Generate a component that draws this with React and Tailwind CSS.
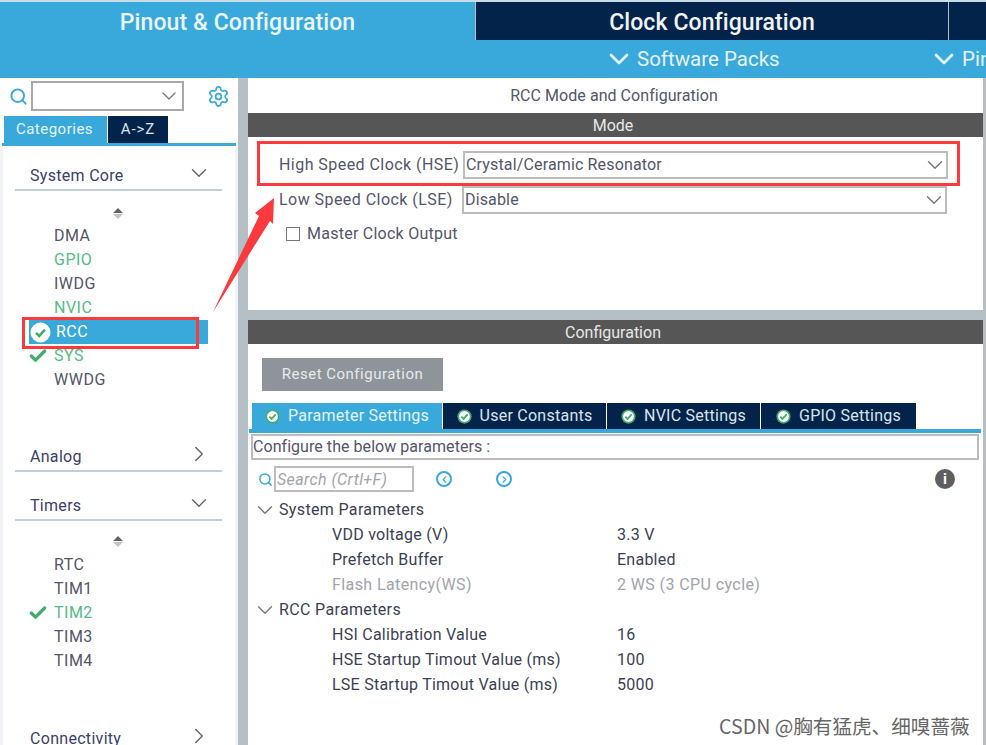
import React from 'react';
import { ChevronDown, ChevronRight, ChevronLeft, Search, Settings, Check } from 'lucide-react';

const systemCore = [
    { name: 'DMA' },
    { name: 'GPIO', tone: 'green' },
    { name: 'IWDG' },
    { name: 'NVIC', tone: 'green' },
    { name: 'RCC', selected: true },
    { name: 'SYS', tone: 'green', checked: true },
    { name: 'WWDG' },
];

const timers = [
    { name: 'RTC' },
    { name: 'TIM1' },
    { name: 'TIM2', tone: 'green', checked: true },
    { name: 'TIM3' },
    { name: 'TIM4' },
];

const systemParams = [
    { label: 'VDD voltage (V)', value: '3.3 V' },
    { label: 'Prefetch Buffer', value: 'Enabled' },
    { label: 'Flash Latency(WS)', value: '2 WS (3 CPU cycle)', muted: true },
];

const rccParams = [
    { label: 'HSI Calibration Value', value: '16' },
    { label: 'HSE Startup Timout Value (ms)', value: '100' },
    { label: 'LSE Startup Timout Value (ms)', value: '5000' },
];

const CheckBadge = ({ size = 14, ring = '#3fae6a' }) => (
    <svg width={size} height={size} viewBox="0 0 16 16" className="shrink-0">
        <circle cx="8" cy="8" r="7.6" fill={ring} />
        <circle cx="8" cy="8" r="5.8" fill="#ffffff" />
        <path d="M4.6 8.2l2.4 2.4 4.4-4.8" fill="none" stroke="#3fae6a" strokeWidth="1.9" />
    </svg>
);

const ScrollArrows = () => (
    <div className="flex h-[14px] flex-col items-center justify-center gap-[1px] pr-[3px]">
        <div className="h-0 w-0 border-x-[5px] border-b-[5px] border-x-transparent border-b-[#666666]" />
        <div className="h-0 w-0 border-x-[5px] border-t-[5px] border-x-transparent border-t-[#c4c4c4]" />
    </div>
);

const SectionHeader = ({ title, open }) => (
    <div className="mx-[15px] flex h-[34px] w-[207px] items-center justify-between border-b-2 border-[#c3ced6] pl-[15px] pr-[10px] pt-[6px]">
        <span className="text-[16px] tracking-[0.3px] text-[#39406b]">{title}</span>
        {open
            ? <ChevronDown size={26} strokeWidth={1.3} className="mb-[6px] text-[#666666]" />
            : <ChevronRight size={26} strokeWidth={1.3} className="mb-[6px] text-[#666666]" />}
    </div>
);

const PeripheralRow = ({ item }) => {
    if (item.selected) {
        return (
            <div className="ml-[29px] flex h-[24px] w-[179px] items-center bg-[#39a9dc] pl-[1px] text-[16px] tracking-[0.5px] text-white">
                <CheckBadge size={21} ring="#ffffff" />
                <span className="ml-[5px]">{item.name}</span>
            </div>
        );
    }
    return (
        <div className="flex h-[24px] items-center text-[16px] tracking-[0.5px]">
            <span className="flex w-[54px] justify-end pr-[6px]">
                {item.checked && <Check size={20} strokeWidth={4} className="text-[#3fae6a]" />}
            </span>
            <span className={item.tone === 'green' ? 'text-[#52bd84]' : 'text-[#54566a]'}>{item.name}</span>
        </div>
    );
};

const Sidebar = () => (
    <div className="flex w-[238px] shrink-0 flex-col overflow-hidden bg-white">
        <div className="flex h-[38px] shrink-0 items-center pb-[2px] pl-[9px]">
            <Search size={19} strokeWidth={2.4} className="text-[#39a9dc]" />
            <div className="ml-[3px] flex h-[30px] w-[153px] items-center justify-end border-2 border-[#a9a9a9] pr-[1px]">
                <ChevronDown size={24} strokeWidth={1.3} className="text-[#777777]" />
            </div>
            <Settings size={23} strokeWidth={1.8} className="ml-[23px] text-[#39a9dc]" />
        </div>
        <div className="flex h-[27px] shrink-0 pl-[4px]">
            <div className="flex w-[103px] items-center justify-center bg-[#39a9dc] pr-[2px] text-[15px] tracking-[0.5px] text-[#e4f3fa]">Categories</div>
            <div className="ml-[1px] flex w-[60px] items-center justify-center bg-[#03234b] text-[15px] tracking-[0.9px] text-[#dbe4ec]">A-&gt;Z</div>
        </div>
        <div className="ml-[2px] h-[3px] w-[234px] shrink-0 bg-[#39a9dc]" />
        <div className="min-h-0 flex-1 overflow-hidden border-x-[3px] border-x-[#f1f4f6]">
            <div className="-mx-[3px] pt-[11px]">
                <SectionHeader title="System Core" open />
                <div className="pt-[15px]"><ScrollArrows /></div>
                <div className="pt-[4px]">
                    {systemCore.map((item) => <PeripheralRow key={item.name} item={item} />)}
                </div>
                <div className="pt-[46px]"><SectionHeader title="Analog" /></div>
                <div className="pt-[15px]"><SectionHeader title="Timers" open /></div>
                <div className="pt-[13px]"><ScrollArrows /></div>
                <div className="pt-[5px]">
                    {timers.map((item) => <PeripheralRow key={item.name} item={item} />)}
                </div>
                <div className="pt-[47px]"><SectionHeader title="Connectivity" /></div>
            </div>
        </div>
    </div>
);

const SelectRow = ({ label, value, labelWidth }) => (
    <div className="flex h-[28px] items-center text-[16px] text-[#54566a]">
        <span className={`tracking-[0.45px] ${labelWidth}`}>{label}</span>
        <div className="flex h-full w-[485px] items-center justify-between border-2 border-[#bcbcbc] pl-[1px]">
            <span className="tracking-[0.15px]">{value}</span>
            <ChevronDown size={26} strokeWidth={1.3} className="-mr-[2px] text-[#777777]" />
        </div>
    </div>
);

const ConfigTab = ({ label, width, active }) => (
    <div className={`flex h-full items-center justify-center gap-[8px] text-[16px] tracking-[0.25px] ${width} ${active ? 'bg-[#39a9dc] text-[#e4f3fa]' : 'bg-[#03234b] text-[#dbe4ec]'}`}>
        <CheckBadge size={15} />
        {label}
    </div>
);

const ParamGroup = ({ title, rows }) => (
    <div>
        <div className="flex h-[25px] items-center pl-[4px] text-[#3c3f55]">
            <ChevronDown size={26} strokeWidth={1.3} className="text-[#777777]" />
            <span className="ml-[1px] text-[16px] tracking-[0.35px]">{title}</span>
        </div>
        {rows.map((row) => (
            <div key={row.label} className={`flex h-[25px] items-center text-[16px] ${row.muted ? 'tracking-[0.4px] text-[#a2a4ab]' : 'tracking-[0.25px] text-[#3c3f55]'}`}>
                <span className="w-[369px] shrink-0 pl-[84px]">{row.label}</span>
                <span>{row.value}</span>
            </div>
        ))}
    </div>
);

const ModePanel = () => (
    <div className="h-[232px] shrink-0 bg-white">
        <div className="flex h-[35px] items-center justify-center pr-[3px] text-[16px] tracking-[0.05px] text-[#54566a]">RCC Mode and Configuration</div>
        <div className="flex h-[24px] items-center justify-center bg-[#555655] pr-[5px] pt-[1px] text-[16px] text-[#e8e8e8]">Mode</div>
        <div className="pl-[31px] pt-[14px]">
            <SelectRow label="High Speed Clock (HSE)" value="Crystal/Ceramic Resonator" labelWidth="w-[184px]" />
            <div className="mt-[7px]">
                <SelectRow label="Low Speed Clock (LSE)" value="Disable" labelWidth="w-[183px]" />
            </div>
            <div className="ml-[7px] mt-[6px] flex h-[28px] items-center text-[16px] tracking-[0.25px] text-[#54566a]">
                <div className="h-[14px] w-[14px] border border-[#777777]" />
                <span className="ml-[7px]">Master Clock Output</span>
            </div>
        </div>
    </div>
);

const ConfigPanel = () => (
    <div className="min-h-0 flex-1 bg-white">
        <div className="flex h-[24px] items-center justify-center bg-[#555655] pr-[5px] pt-[1px] text-[16px] text-[#e8e8e8]">Configuration</div>
        <div className="pl-[14px] pt-[14px]">
            <div className="flex h-[33px] w-[181px] items-center justify-center bg-[#8e9499] text-[15px] tracking-[0.5px] text-[#e8eaec]">Reset Configuration</div>
        </div>
        <div className="ml-[4px] mt-[12px] flex h-[26px] gap-[1px]">
            <ConfigTab label="Parameter Settings" width="w-[190px]" active />
            <ConfigTab label="User Constants" width="w-[163px]" />
            <ConfigTab label="NVIC Settings" width="w-[153px]" />
            <ConfigTab label="GPIO Settings" width="w-[155px]" />
        </div>
        <div className="ml-[1px] h-[4px] w-[732px] bg-[#39a9dc]" />
        <div className="ml-[3px] mt-[1px] flex h-[26px] w-[728px] items-center border-2 border-[#bcbcbc] text-[16px] tracking-[0.05px] text-[#54566a]">Configure the below parameters :</div>
        <div className="flex h-[33px] items-center pl-[10px] pt-[5px]">
            <Search size={15} strokeWidth={2.4} className="text-[#39a9dc]" />
            <div className="ml-[1px] flex h-[26px] w-[140px] items-center border-2 border-[#bcbcbc] pl-[1px] pt-[1px] text-[16px] italic tracking-[0.4px] text-[#a2a4ab]">Search (Crtl+F)</div>
            <div className="ml-[22px] flex h-[16px] w-[16px] items-center justify-center rounded-full border-2 border-[#39a9dc]">
                <ChevronLeft size={11} strokeWidth={2.5} className="text-[#39a9dc]" />
            </div>
            <div className="ml-[44px] flex h-[16px] w-[16px] items-center justify-center rounded-full border-2 border-[#39a9dc]">
                <ChevronRight size={11} strokeWidth={2.5} className="text-[#39a9dc]" />
            </div>
            <div className="ml-[423px] flex h-[20px] w-[20px] items-center justify-center rounded-full bg-[#5f5f5f] text-[15px] font-bold text-white">i</div>
        </div>
        <div className="pt-[4px]">
            <ParamGroup title="System Parameters" rows={systemParams} />
            <ParamGroup title="RCC Parameters" rows={rccParams} />
        </div>
    </div>
);

// Red call-outs drawn on top of the screenshot
const Annotations = () => (
    <>
        <div className="absolute left-[257px] top-[141px] h-[45px] w-[703px] border-[3px] border-[#fb3a3d]" />
        <div className="absolute left-[22px] top-[317px] h-[32px] w-[177px] border-[3px] border-[#fb3a3d]" />
        <svg className="absolute left-[210px] top-[198px]" width="70" height="116" viewBox="0 0 70 116">
            <path d="M3 114L49 18L45 15L64 0L63 26L60 23Z" fill="#fb3a3d" />
        </svg>
    </>
);

const App = () => (
    <div className="relative flex h-[745px] w-[986px] flex-col overflow-hidden bg-[#b4bfc6] font-['Roboto','Liberation_Sans',sans-serif]">
        <div className="h-[2px] shrink-0 bg-[#c9dde8]" />
        <div className="flex h-[38px] shrink-0 text-[23px] font-medium tracking-[0.1px]">
            <div className="flex w-[475px] items-center justify-center bg-[#39a9dc] pt-[4px] text-[#eaf6fc]">Pinout &amp; Configuration</div>
            <div className="ml-[1px] flex w-[472px] items-center justify-center bg-[#03234b] pt-[4px] text-[#f0f3f6]">Clock Configuration</div>
            <div className="ml-[1px] flex-1 bg-[#03234b]" />
        </div>
        <div className="flex h-[38px] shrink-0 items-center overflow-hidden bg-[#39a9dc] text-[20.5px] text-[#e4f3fa]">
            <ChevronDown size={32} strokeWidth={2} className="ml-[603px] shrink-0" />
            <span className="ml-[2px] w-[291px] shrink-0">Software Packs</span>
            <ChevronDown size={32} strokeWidth={2} className="shrink-0" />
            <span className="ml-[2px] w-[24px] shrink-0 overflow-hidden whitespace-nowrap">Pinout</span>
        </div>
        <div className="flex min-h-0 flex-1">
            <Sidebar />
            <div className="ml-[10px] flex w-[735px] flex-col gap-[10px]">
                <ModePanel />
                <ConfigPanel />
            </div>
        </div>
        <Annotations />
        <div className="absolute left-[719px] top-[711px] font-['Noto_Sans_CJK_SC','Noto_Sans',sans-serif] text-[19.6px] text-[#666666]">CSDN @胸有猛虎、细嗅蔷薇</div>
    </div>
);

export default App;
